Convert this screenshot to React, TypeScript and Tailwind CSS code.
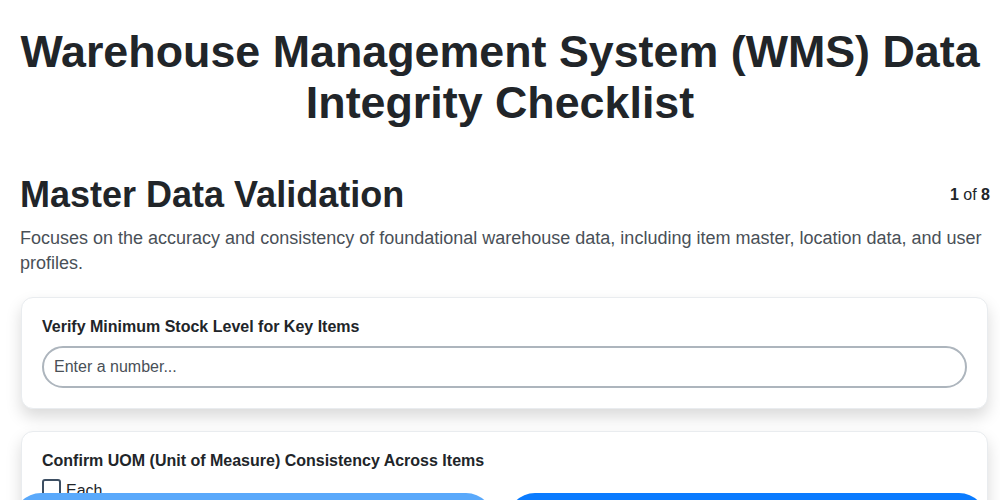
import { useState } from 'react';

const SECTION = {
  title: 'Master Data Validation',
  description:
    'Focuses on the accuracy and consistency of foundational warehouse data, including item master, location data, and user profiles.',
  index: 1,
  total: 8,
};

function Card({ children }: { children: React.ReactNode }) {
  return (
    <div className="ml-px mr-[2px] rounded-xl border border-[#e9ecef] bg-white px-5 pb-5 pt-[19px] shadow-[0_8px_16px_rgba(0,0,0,0.15)]">
      {children}
    </div>
  );
}

export default function App() {
  const [value, setValue] = useState('');
  const [each, setEach] = useState(false);

  return (
    <div className="min-h-screen bg-white pb-24 font-['Liberation_Sans',Arial,sans-serif] text-[#212529]">
      <h1 className="px-5 pt-[26px] text-center text-[44.8px] font-bold leading-[51px]">
        Warehouse Management System (WMS) Data Integrity Checklist
      </h1>

      <div className="pl-5 pr-[10px] pt-[45px]">
        <div className="flex items-center justify-between">
          <h2 className="text-4xl font-bold leading-[1.2]">{SECTION.title}</h2>
          <span className="text-base">
            <b>{SECTION.index}</b> of <b>{SECTION.total}</b>
          </span>
        </div>
        <p className="mt-[10px] text-lg leading-[1.4] text-[#495057]">{SECTION.description}</p>

        <div className="mt-[20px] flex flex-col gap-[22px]">
          <Card>
            <label className="mb-[10px] block text-base font-bold leading-[1.2]">
              Verify Minimum Stock Level for Key Items
            </label>
            <input
              type="number"
              value={value}
              onChange={(e) => setValue(e.target.value)}
              placeholder="Enter a number..."
              className="h-[42px] w-full rounded-full border-2 border-[#adb5bd] px-2.5 text-base text-[#212529] outline-none placeholder:text-[#495057]"
            />
          </Card>

          <Card>
            <label className="mb-[9px] block text-base font-bold leading-[1.2]">
              Confirm UOM (Unit of Measure) Consistency Across Items
            </label>
            <label className="flex items-start gap-[5px] text-base leading-[19px]">
              <button
                type="button"
                onClick={() => setEach(!each)}
                className="h-[19px] w-[19px] shrink-0 rounded-[3px] border-2 border-[#3d4f63] bg-white"
              />
              <span className="pt-[2px]">Each</span>
            </label>
          </Card>
        </div>
      </div>

      {/* nav buttons sit over the content, mostly below the fold */}
      <div className="fixed left-0 right-0 top-[493px] flex gap-[13px] px-[13px]">
        <button
          type="button"
          disabled
          className="h-[66px] flex-1 rounded-[28px] bg-[#5aa9fb] text-base font-bold text-white"
        >
          Previous
        </button>
        <button
          type="button"
          className="h-[66px] flex-1 rounded-[28px] bg-[#0a7bff] text-base font-bold text-white"
        >
          Next
        </button>
      </div>
    </div>
  );
}
